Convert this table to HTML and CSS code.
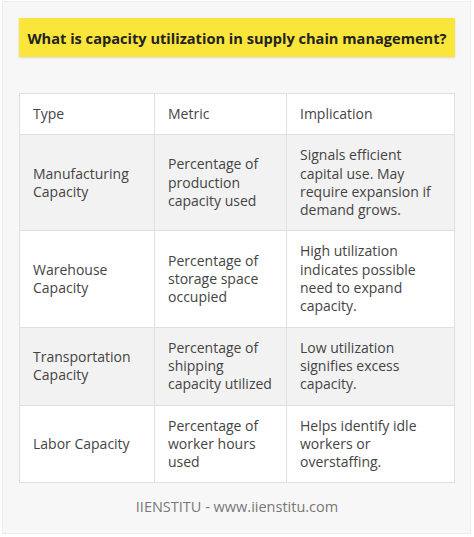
FILE: index.html
```html
<!DOCTYPE html>
<html>
<head>
    <title>Capacity utilization</title>
    <meta name="viewport" content="width=device-width,initial-scale=1.0">
    <link rel="stylesheet" href="styles.css">
</head>
<body>
    <div class="card">
        <h1 class="title">What is capacity utilization in supply chain management?</h1>
        <table class="grid">
            <tr>
                <td class="col-type">Type</td>
                <td class="col-metric">Metric</td>
                <td>Implication</td>
            </tr>
            <tr class="alt">
                <td>Manufacturing Capacity</td>
                <td>Percentage of production capacity used</td>
                <td>Signals efficient capital use. May require expansion if demand grows.</td>
            </tr>
            <tr>
                <td>Warehouse Capacity</td>
                <td>Percentage of storage space occupied</td>
                <td>High utilization indicates possible need to expand capacity.</td>
            </tr>
            <tr class="alt">
                <td>Transportation Capacity</td>
                <td>Percentage of shipping capacity utilized</td>
                <td>Low utilization signifies excess capacity.</td>
            </tr>
            <tr>
                <td>Labor Capacity</td>
                <td>Percentage of worker hours used</td>
                <td>Helps identify idle workers or overstaffing.</td>
            </tr>
        </table>
        <p class="footer">IIENSTITU - www.iienstitu.com</p>
    </div>
</body>
</html>
```

FILE: styles.css
```css
html, body{
    margin: 0;
    padding: 0;
    background: #fff;
}

body{
    font-family: "Open Sans", "Liberation Sans", sans-serif;
    color: #444;
}

.card{
    margin: 1px 3px 0 2px;
    height: 533px;
    box-sizing: border-box;
    background: #f7f7f7;
    border: 1px solid #eeeeee;
    padding: 16px 15px 0 16px;
}

.title{
    margin: 0;
    height: 39px;
    display: flex;
    align-items: center;
    justify-content: center;
    white-space: nowrap;
    background: #fae53a;
    box-shadow: 0 1px 2px rgba(0, 0, 0, 0.12);
    font-size: 14.6px;
    font-weight: 700;
    color: #222;
}

.grid{
    margin-top: 36px;
    width: 436px;
    border-collapse: collapse;
    background: #fff;
    font-size: 14px;
    line-height: 18.3px;
}

.grid td{
    border: 1px solid #e0e0e0;
    padding: 11px 10px 11px 13px;
    vertical-align: middle;
}

.grid .col-type{
    width: 111px;
}

.grid .col-metric{
    width: 108px;
}

.grid .alt td{
    background: #f2f2f2;
}

.footer{
    margin: 14px 0 0;
    text-align: center;
    font-size: 14.5px;
    color: #777;
}
```
